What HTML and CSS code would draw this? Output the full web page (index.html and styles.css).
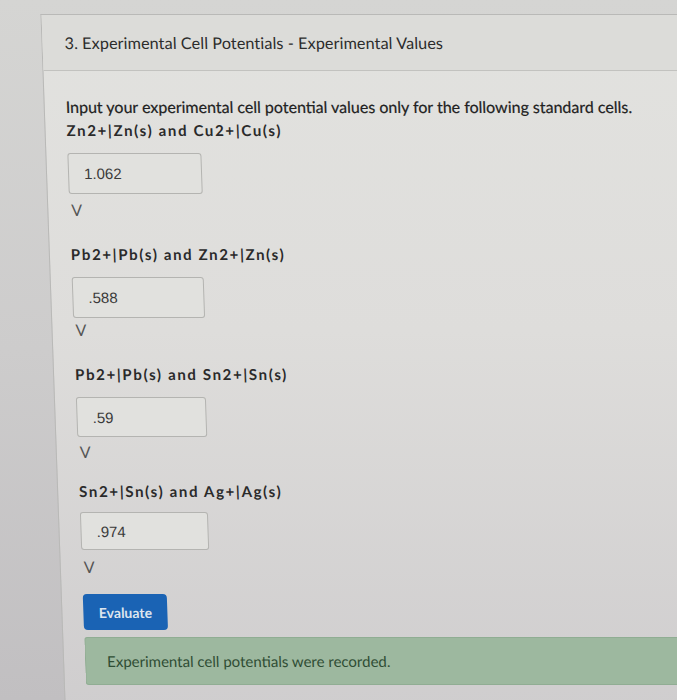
FILE: index.html
```html
<!DOCTYPE html>
<html lang="en">
<head>
<meta charset="utf-8">
<title>Experimental Cell Potentials</title>
<link rel="stylesheet" href="styles.css">
</head>
<body>
<div class="page">
  <section class="card">
    <header class="card-header">
      <h1 class="title">3. Experimental Cell Potentials - Experimental Values</h1>
    </header>
    <div class="card-body">
      <p class="intro">Input your experimental cell potential values only for the following standard cells.<br><span class="cell">Zn2+|Zn(s) and Cu2+|Cu(s)</span></p>
      <div class="box b1"><span class="val">1.062</span></div>
      <div class="unit u1">V</div>

      <div class="cell label l2">Pb2+|Pb(s) and Zn2+|Zn(s)</div>
      <div class="box b2"><span class="val">.588</span></div>
      <div class="unit u2">V</div>

      <div class="cell label l3">Pb2+|Pb(s) and Sn2+|Sn(s)</div>
      <div class="box b3"><span class="val">.59</span></div>
      <div class="unit u3">V</div>

      <div class="cell label l4">Sn2+|Sn(s) and Ag+|Ag(s)</div>
      <div class="box b4"><span class="val">.974</span></div>
      <div class="unit u4">V</div>

      <button class="evaluate" type="button">Evaluate</button>
      <div class="notice">Experimental cell potentials were recorded.</div>
    </div>
  </section>
</div>
</body>
</html>
```

FILE: styles.css
```css
html, body {
  margin: 0;
  padding: 0;
  height: 700px;
  overflow: hidden;
}
body {
  background: linear-gradient(180deg, #d5d5d3 0%, #cdcccc 50%, #c1bfc1 100%);
  font-family: "Lato", "Noto Sans", sans-serif;
  color: #2c2c2c;
}
.page {
  transform: skewX(2deg);
  transform-origin: 0 0;
  padding-top: 14px;
}
.card {
  margin-left: 40px;
  min-height: 700px;
  border: 1px solid #b9b9b7;
  border-right: none;
  background: linear-gradient(180deg, #e2e2df 0%, #dedddb 45%, #cfcdce 100%);
}
.card-header {
  height: 55px;
  display: flex;
  align-items: center;
  padding-left: 22px;
  border-bottom: 1px solid #c2c2bf;
  background: #dcdcd9;
}
.title {
  margin: 0;
  font-size: 16.2px;
  font-weight: 400;
  color: #2c2c2c;
  letter-spacing: 0.1px;
}
.card-body {
  padding: 24px 0 0 21px;
  display: flex;
  flex-direction: column;
  align-items: flex-start;
}
.intro {
  margin: 0;
  font-size: 16px;
  line-height: 23px;
  font-weight: 400;
  color: #222;
  -webkit-text-stroke: 0.2px #222;
}
.cell {
  font-weight: 700;
  letter-spacing: 1.65px;
  font-size: 15px;
  color: #2a2a2a;
  -webkit-text-stroke: 0;
}
.label {
  line-height: 23px;
}
.box {
  box-sizing: border-box;
  border: 1px solid #b4b4b1;
  border-radius: 3px;
  background: #e1e1de;
  display: flex;
  align-items: center;
  padding-left: 15px;
}
.val {
  font-family: "Liberation Sans", Arial, sans-serif;
  font-size: 15px;
  color: #3a3a3a;
}
.unit {
  font-size: 16px;
  line-height: 20px;
  color: #555;
  padding-left: 2px;
}
.b1 { margin-top: 11px; width: 134px; height: 41px; }
.u1 { margin-top: 6px; }
.l2 { margin-top: 23px; }
.b2 { margin-top: 11px; width: 132px; height: 41px; }
.u2 { margin-top: 2px; }
.l3 { margin-top: 23px; }
.b3 { margin-top: 11px; width: 130px; height: 40px; }
.u3 { margin-top: 5px; }
.l4 { margin-top: 18px; }
.b4 { margin-top: 9px; width: 128px; height: 38px; }
.u4 { margin-top: 7px; }
.evaluate {
  margin-top: 17px;
  width: 84px;
  height: 36px;
  border: none;
  border-radius: 4px;
  background: #1a63b4;
  color: #dde5ee;
  font-family: "Lato", "Noto Sans", sans-serif;
  font-size: 14px;
  font-weight: 700;
  padding: 0;
  cursor: pointer;
}
.notice {
  margin-top: 7px;
  align-self: stretch;
  box-sizing: border-box;
  height: 48px;
  display: flex;
  align-items: center;
  padding-left: 21px;
  background: #9db89f;
  border: 1px solid #90ad93;
  border-right: none;
  border-radius: 3px 0 0 3px;
  font-size: 15px;
  color: #2f4d34;
}
```
